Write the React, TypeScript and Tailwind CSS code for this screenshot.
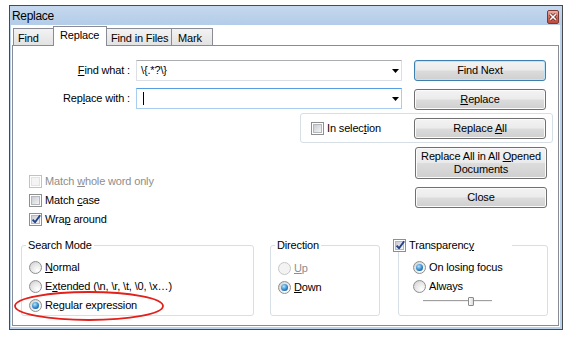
import type { ReactNode } from 'react';

const U = ({ children }: { children: ReactNode }) => <span className="underline underline-offset-[1px]">{children}</span>;

const Checkbox = ({ checked = false, disabled = false }: { checked?: boolean; disabled?: boolean }) => (
    <span className={`relative block flex-none w-[13px] h-[13px] border bg-white p-[1px] ${disabled ? 'border-[#c2c2c2]' : 'border-[#8e8f8f]'}`}>
        <span className={`block w-full h-full border ${disabled ? 'border-[#e3e3e3] bg-[#f4f4f4]' : 'border-[#b4b7bc] bg-[linear-gradient(135deg,#c9ccd1,#f4f4f4)]'}`} />
        {checked && (
            <svg className="absolute left-[0px] top-[-1px]" width="13" height="13" viewBox="0 0 13 13">
                <path d="M2.6 6.6 L5 9.2 L10.2 2.2" fill="none" stroke="#22408a" strokeWidth="1.9" strokeLinejoin="round" />
            </svg>
        )}
    </span>
);

const Radio = ({ checked = false, disabled = false }: { checked?: boolean; disabled?: boolean }) => (
    <span
        className={`flex-none w-[13px] h-[13px] rounded-full border flex items-center justify-center ${
            disabled
                ? 'border-[#c6c6c6] bg-[#f3f3f3]'
                : 'border-[#8e8f8f] bg-[radial-gradient(circle_at_70%_75%,#ffffff,#e6e6e6_55%,#c9c9c9)]'
        }`}
    >
        {checked && <span className="w-[7px] h-[7px] rounded-full bg-[radial-gradient(circle_at_40%_35%,#b4e6fc,#2d86cc_55%,#0c3e78)]" />}
    </span>
);

const Button = ({ children, def = false, h = 'h-[21px]' }: { children: ReactNode; def?: boolean; h?: string }) => (
    <div
        className={`w-[132px] ${h} flex-none rounded-[3px] border flex items-center justify-center text-center leading-[13px] bg-[linear-gradient(#f3f3f3,#ebebeb_48%,#dcdcdc_52%,#cfcfcf)] ${
            def ? 'border-[#3c7fb1] shadow-[inset_0_0_0_1px_#bfe5f8]' : 'border-[#707070] shadow-[inset_0_0_0_1px_#fbfbfb]'
        }`}
    >
        <span>{children}</span>
    </div>
);

const Arrow = () => (
    <svg className="ml-auto mr-[2px] flex-none" width="7" height="4" viewBox="0 0 7 4">
        <polygon points="0,0 7,0 3.5,4" fill="#000" />
    </svg>
);

const Tab = ({ label, w, pl, active = false }: { label: string; w: string; pl: string; active?: boolean }) => (
    <div
        className={`${w} ${pl} flex-none flex items-center border border-[#898c95] ${
            active ? 'relative z-10 h-[20px] -mb-[1px] border-b-0 bg-white pb-[2px]' : 'h-[17px] border-b-0 bg-[linear-gradient(#f3f3f3,#e2e2e2)] pt-[2px]'
        } ${label === 'Find' ? '' : '-ml-[1px]'}`}
    >
        {label}
    </div>
);

const Row = ({ children, className = '' }: { children: ReactNode; className?: string }) => (
    <div className={`h-[19px] flex items-center ${className}`}>{children}</div>
);

export default function App() {
    return (
        <div className="relative w-[574px] h-[339px] bg-white pt-[5px] pl-[9px] font-['Liberation_Sans',Arial,sans-serif] text-[11px] leading-[13px] tracking-[-0.15px] text-black">
            <div className="w-[554px] h-[325px] border border-[#4a4a4a] bg-[#b9d1ea] flex flex-col">
                {/* title bar */}
                <div className="h-[19px] flex-none flex items-start pl-[2px] pr-[3px] bg-[linear-gradient(#c5d8ee,#b3cce8)]">
                    <span className="mt-[4px] text-[12px] tracking-[-0.3px]">Replace</span>
                    <div className="ml-auto mt-[4px] w-[12px] h-[14px] rounded-[2px] border border-[#7a3a34] bg-[linear-gradient(#eab3a8,#d06a5c_50%,#c0493c)] flex items-center justify-center">
                        <svg width="8" height="8" viewBox="0 0 8 8">
                            <path d="M1.2 1.2 L6.8 6.8 M6.8 1.2 L1.2 6.8" stroke="#5a1f1a" strokeWidth="3" />
                            <path d="M1.2 1.2 L6.8 6.8 M6.8 1.2 L1.2 6.8" stroke="#fff" strokeWidth="1.6" />
                        </svg>
                    </div>
                </div>

                {/* client */}
                <div className="flex-1 ml-[1px] mr-[2px] mb-[2px] bg-white px-[1px] pb-[1px] flex flex-col">
                    <div className="h-[20px] flex-none flex items-end pl-[1px]">
                        <Tab label="Find" w="w-[41px]" pl="pl-[4px]" />
                        <Tab label="Replace" w="w-[54px]" pl="pl-[6px]" active />
                        <Tab label="Find in Files" w="w-[66px]" pl="pl-[4px]" />
                        <Tab label="Mark" w="w-[42px]" pl="pl-[6px]" />
                    </div>

                    <div className="flex-1 border border-[#898c95] flex flex-col">
                        {/* Find what */}
                        <div className="mt-[14px] h-[21px] flex items-center">
                            <span className="w-[117px] text-right">
                                <U>F</U>ind what :
                            </span>
                            <div className="ml-[6px] w-[266px] h-[21px] border border-[#dbdfe6] border-t-[#abadb3] flex items-center pl-[4px]">
                                <span>{'\\{.*?\\}'}</span>
                                <Arrow />
                            </div>
                            <div className="ml-[12px]">
                                <Button def>Find Next</Button>
                            </div>
                        </div>

                        {/* Replace with */}
                        <div className="mt-[7px] h-[21px] flex items-center">
                            <span className="w-[117px] text-right">
                                Rep<U>l</U>ace with :
                            </span>
                            <div className="ml-[6px] w-[266px] h-[21px] border border-[#a9cdf0] border-t-[#569de5] flex items-center pl-[6px]">
                                <span className="w-[1px] h-[13px] bg-black" />
                                <Arrow />
                            </div>
                            <div className="ml-[12px] mt-[1px]">
                                <Button>
                                    <U>R</U>eplace
                                </Button>
                            </div>
                        </div>

                        {/* In selection */}
                        <div className="mt-[4px] ml-[287px] w-[253px] h-[30px] flex-none rounded-[3px] border border-[#d5dfe5] flex items-center">
                            <span className="ml-[10px]">
                                <Checkbox />
                            </span>
                            <span className="ml-[3px]">
                                In selec<U>t</U>ion
                            </span>
                            <div className="ml-auto mr-[6px]">
                                <Button>
                                    Replace <U>A</U>ll
                                </Button>
                            </div>
                        </div>

                        {/* options + buttons */}
                        <div className="flex">
                            <div className="flex-1 pl-[16px] pt-[29px]">
                                <Row className="gap-[3px] text-[#8d8d8d]">
                                    <Checkbox disabled />
                                    <span>
                                        Match <U>w</U>hole word only
                                    </span>
                                </Row>
                                <Row className="gap-[3px]">
                                    <Checkbox />
                                    <span>
                                        Match <U>c</U>ase
                                    </span>
                                </Row>
                                <Row className="gap-[3px]">
                                    <Checkbox checked />
                                    <span>
                                        Wra<U>p</U> around
                                    </span>
                                </Row>
                            </div>
                            <div className="w-[132px] mr-[11px] pt-[4px] flex flex-col gap-[8px]">
                                <Button h="h-[32px]">
                                    Replace All in All <U>O</U>pened
                                    <br />
                                    Documents
                                </Button>
                                <Button>Close</Button>
                            </div>
                        </div>

                        {/* group boxes */}
                        <div className="mt-[10px] pl-[8px] flex">
                            <fieldset className="w-[233px] h-[77px] rounded-[3px] border border-[#d5dfe5] px-[4px]">
                                <legend className="px-[2px] leading-[13px]">Search Mode</legend>
                                <div className="pt-[6px] pl-[3px]">
                                    <Row className="gap-[3px]">
                                        <Radio />
                                        <span>
                                            <U>N</U>ormal
                                        </span>
                                    </Row>
                                    <Row className="gap-[3px]">
                                        <Radio />
                                        <span>
                                            E<U>x</U>tended (\n, \r, \t, \0, \x…)
                                        </span>
                                    </Row>
                                    <Row className="gap-[3px]">
                                        <Radio checked />
                                        <span>
                                            Re<U>g</U>ular expression
                                        </span>
                                    </Row>
                                </div>
                            </fieldset>

                            <fieldset className="ml-[16px] w-[110px] h-[77px] rounded-[3px] border border-[#d5dfe5] px-[4px]">
                                <legend className="px-[2px] leading-[13px]">Direction</legend>
                                <div className="pt-[7px] pl-[3px]">
                                    <Row className="gap-[3px] text-[#8d8d8d]">
                                        <Radio disabled />
                                        <span>
                                            <U>U</U>p
                                        </span>
                                    </Row>
                                    <Row className="gap-[3px]">
                                        <Radio checked />
                                        <span>
                                            <U>D</U>own
                                        </span>
                                    </Row>
                                </div>
                            </fieldset>

                            <fieldset className="ml-[18px] w-[150px] h-[77px] rounded-[3px] border border-[#d5dfe5]">
                                <legend className="-ml-[6px] w-[119px] bg-white flex items-center gap-[3px] leading-[13px]">
                                    <Checkbox checked />
                                    <span>
                                        Transparenc<U>y</U>
                                    </span>
                                </legend>
                                <div className="pt-[6px] pl-[14px]">
                                    <Row className="gap-[3px]">
                                        <Radio checked />
                                        <span>On losing focus</span>
                                    </Row>
                                    <Row className="gap-[3px]">
                                        <Radio />
                                        <span>Always</span>
                                    </Row>
                                    <div className="ml-[10px] w-[69px] h-[10px] flex items-center">
                                        <div className="w-[45px] h-[2px] border-t border-[#a0a0a0] border-b-[#f0f0f0] border-b" />
                                        <div className="w-[6px] h-[9px] rounded-[1px] border border-[#8a8a8a] bg-[linear-gradient(90deg,#fdfdfd,#dcdcdc)]" />
                                        <div className="flex-1 h-[2px] border-t border-[#a0a0a0] border-b-[#f0f0f0] border-b" />
                                    </div>
                                </div>
                            </fieldset>
                        </div>
                    </div>
                </div>
            </div>

            {/* red annotation */}
            <svg className="absolute left-[13px] top-[290px]" width="152" height="32" viewBox="0 0 152 32">
                <ellipse cx="76" cy="16" rx="74" ry="14" fill="none" stroke="#e3201b" strokeWidth="1.8" />
            </svg>
        </div>
    );
}
